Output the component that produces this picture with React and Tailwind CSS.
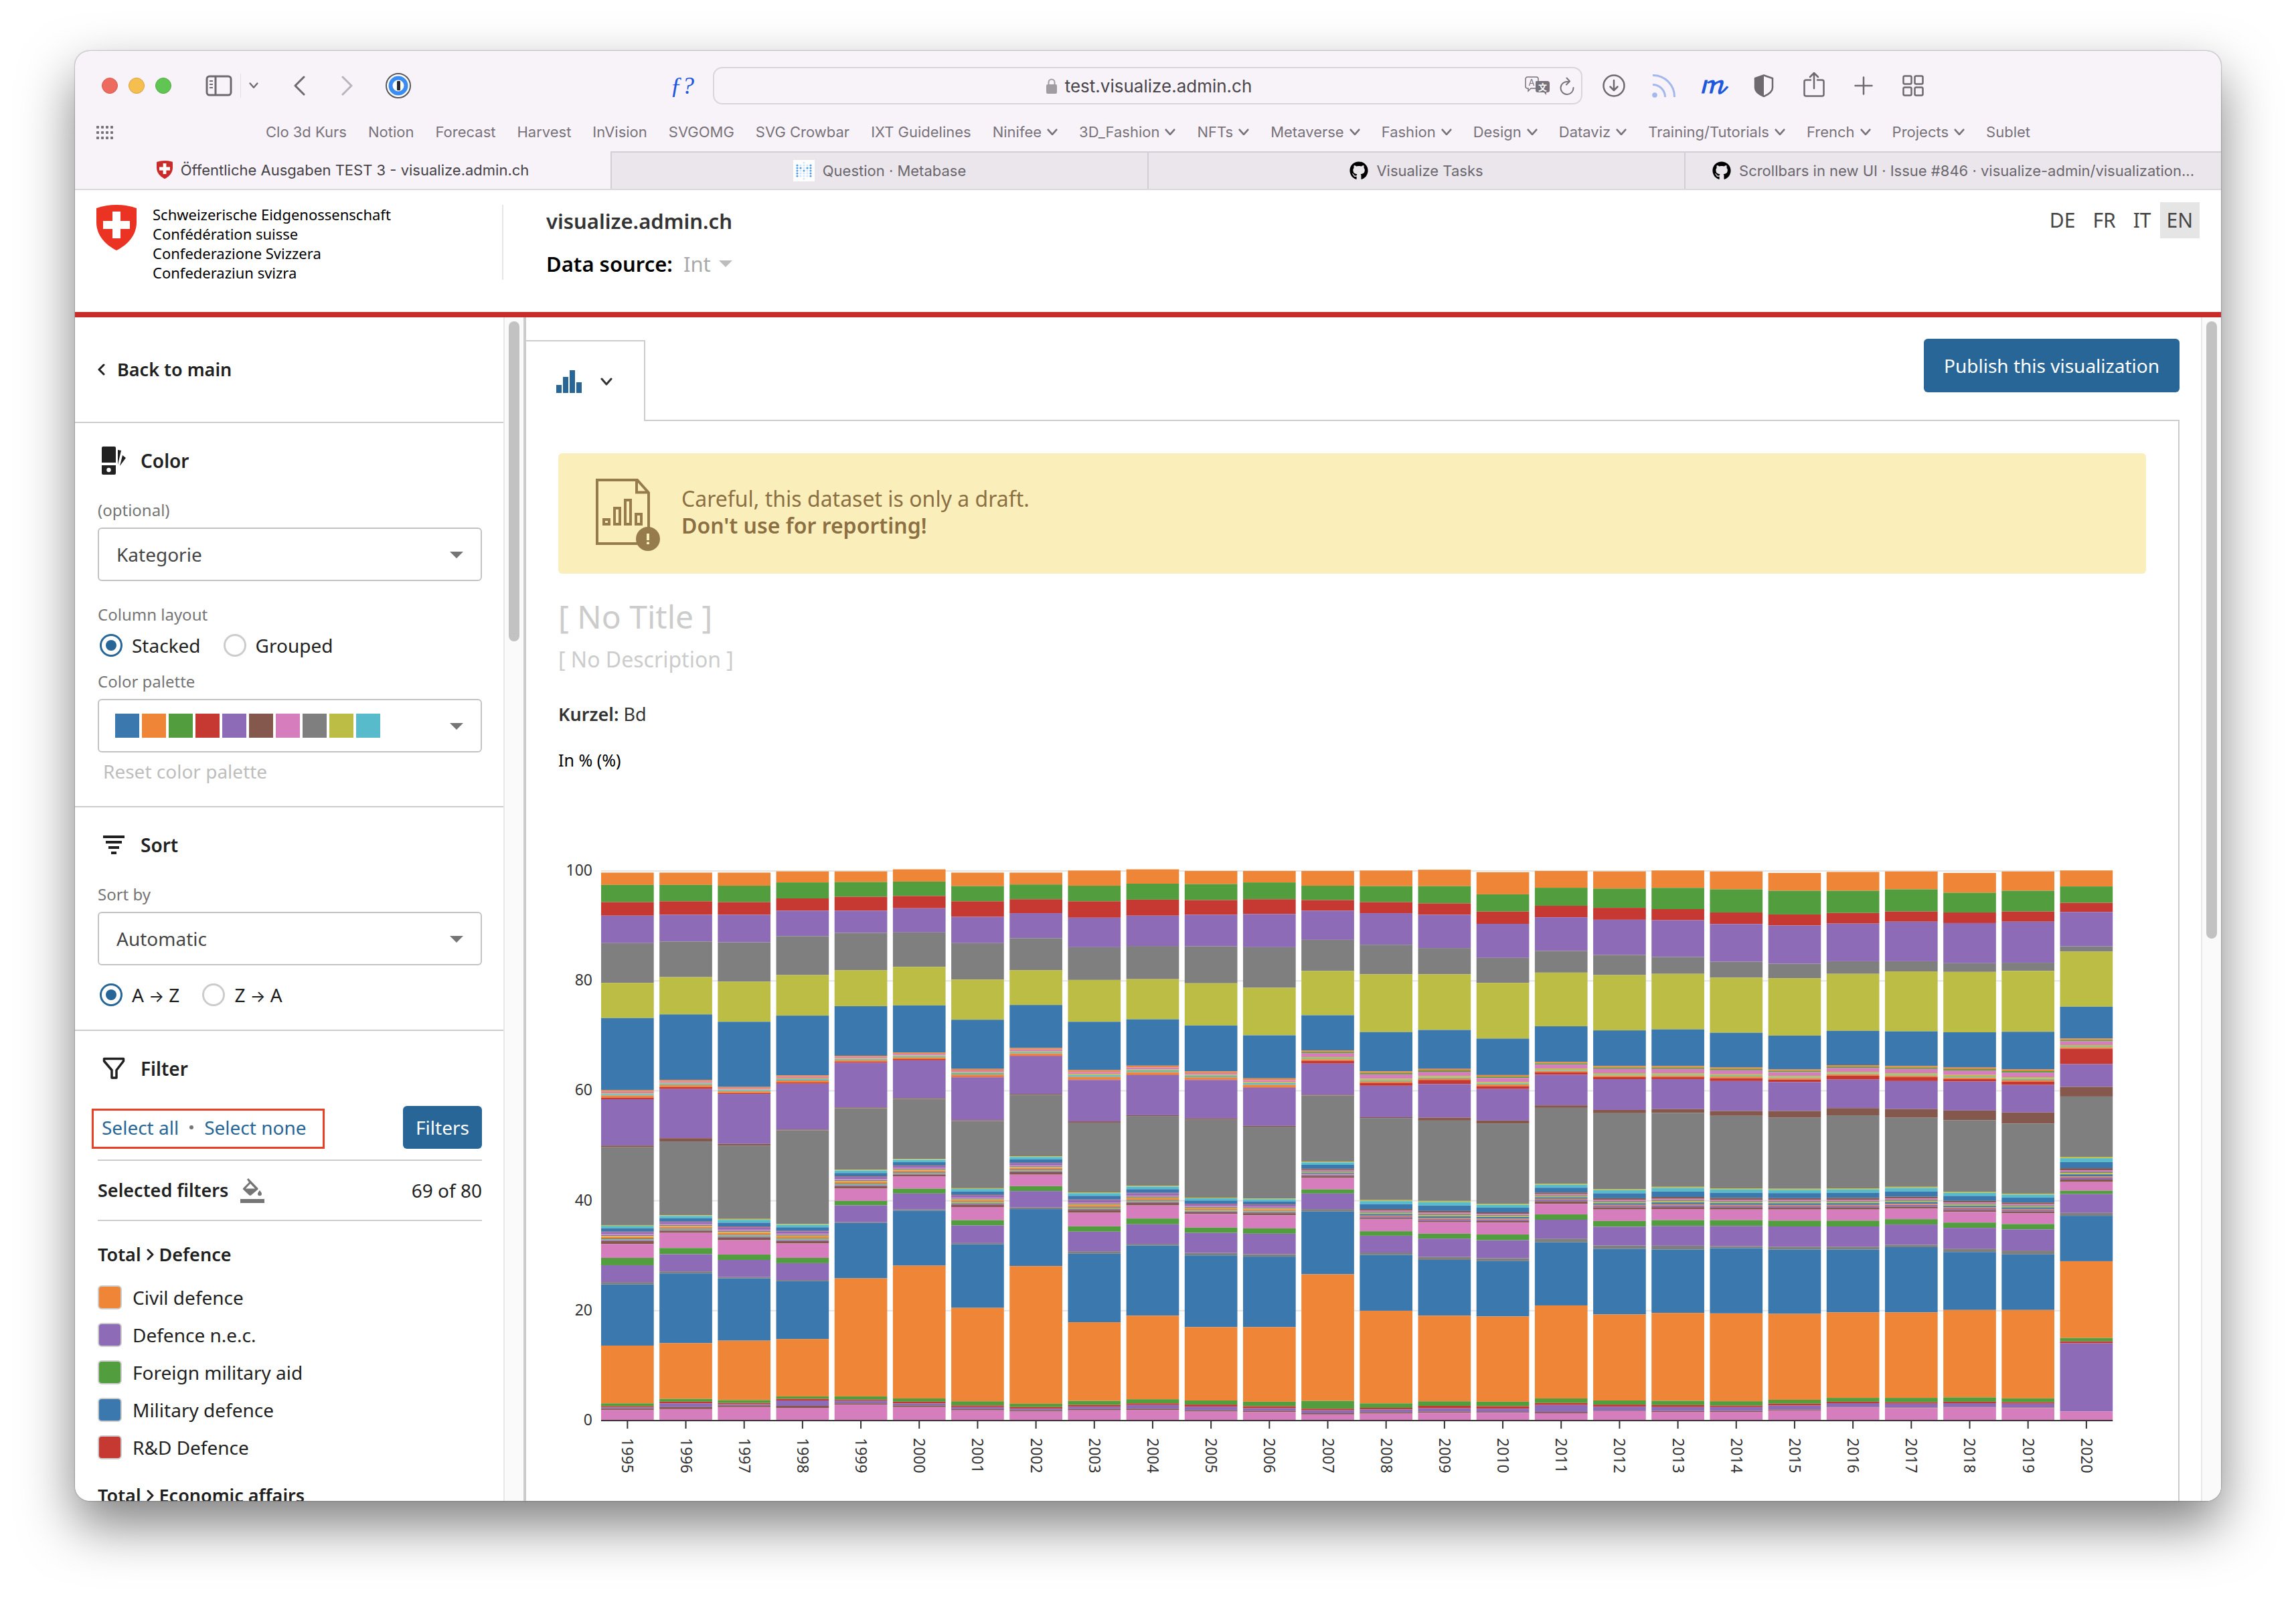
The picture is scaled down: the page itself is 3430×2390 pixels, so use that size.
import React, { useState } from 'react';
import { FaGithub } from 'react-icons/fa';

const C = {
  blue: '#3a78ae',
  orange: '#ef8637',
  green: '#529e3e',
  red: '#c53932',
  purple: '#8e6bb6',
  brown: '#85584d',
  pink: '#d57dbd',
  gray: '#7f7f7f',
  olive: '#bcbd45',
  cyan: '#58bbcb',
};

const PALETTE = [C.blue, C.orange, C.green, C.red, C.purple, C.brown, C.pink, C.gray, C.olive, C.cyan];

const BOOKMARKS = [
  ['Clo 3d Kurs'],
  ['Notion'],
  ['Forecast'],
  ['Harvest'],
  ['InVision'],
  ['SVGOMG'],
  ['SVG Crowbar'],
  ['IXT Guidelines'],
  ['Ninifee', true],
  ['3D_Fashion', true],
  ['NFTs', true],
  ['Metaverse', true],
  ['Fashion', true],
  ['Design', true],
  ['Dataviz', true],
  ['Training/Tutorials', true],
  ['French', true],
  ['Projects', true],
  ['Sublet'],
];

const DEFENCE = [
  ['Civil defence', C.orange],
  ['Defence n.e.c.', C.purple],
  ['Foreign military aid', C.green],
  ['Military defence', C.blue],
  ['R&D Defence', C.red],
];

// Thin categories between two large ones, as [color, share of the zone]
const UPPER_EARLY = [[C.orange, 0.2], [C.pink, 0.22], [C.olive, 0.12], [C.cyan, 0.18], [C.orange, 0.28]];
const UPPER_LATE = [[C.orange, 0.14], [C.green, 0.12], [C.pink, 0.38], [C.olive, 0.14], [C.cyan, 0.08], [C.orange, 0.14]];
const LOWER_EARLY = [
  [C.olive, 0.05], [C.cyan, 0.15], [C.blue, 0.21], [C.red, 0.03], [C.purple, 0.13], [C.pink, 0.06], [C.gray, 0.06],
  [C.olive, 0.04], [C.orange, 0.11], [C.blue, 0.04], [C.olive, 0.03], [C.green, 0.03], [C.purple, 0.06],
];
const LOWER_LATE = [
  [C.olive, 0.06], [C.cyan, 0.17], [C.blue, 0.27], [C.brown, 0.09], [C.pink, 0.06], [C.gray, 0.06],
  [C.olive, 0.06], [C.blue, 0.09], [C.orange, 0.05], [C.purple, 0.09],
];

// Order of the bands from the top of a column; "upper" and "lower" are the thin zones
const BANDS = [
  C.orange, C.green, C.red, C.purple, C.gray, C.olive, C.blue, 'upper', C.red, C.purple, C.brown, C.gray,
  'lower', C.brown, C.pink, C.green, C.purple, C.gray, C.blue, C.orange, C.green, C.red, C.purple, C.brown, C.pink,
];

// Top edge of every band, counted down; base is the zero line, unit is one percent
const SERIES = [
  {
    base: 1409,
    unit: 13.41,
    rows: {
      1995: [72, 102, 144, 177, 244, 341, 427, 603, 621, 625, 738, 742, 932, 971, 978, 1012, 1030, 1071, 1077, 1226, 1367, 1374, 1377, 1380, 1383],
      1996: [72, 102, 142, 175, 240, 327, 418, 578, 595, 600, 720, 728, 908, 946, 951, 988, 1003, 1045, 1050, 1220, 1356, 1363, 1367, 1376, 1381],
      1997: [72, 104, 144, 175, 242, 338, 436, 595, 610, 612, 734, 738, 917, 963, 969, 1004, 1017, 1059, 1062, 1214, 1359, 1366, 1369, 1372, 1376],
      1998: [69, 96, 135, 165, 227, 322, 421, 567, 584, 587, 699, 701, 929, 971, 977, 1012, 1025, 1066, 1069, 1210, 1350, 1356, 1360, 1373, 1378],
      1999: [69, 95, 131, 165, 219, 310, 398, 519, 533, 536, 645, 647, 797, 837, 843, 873, 884, 925, 927, 1062, 1350, 1358, 1361, 1367, 1370],
      2000: [64, 94, 129, 159, 218, 302, 396, 511, 527, 530, 622, 624, 771, 809, 813, 843, 855, 894, 897, 1031, 1355, 1363, 1367, 1372, 1376],
      2001: [72, 105, 142, 180, 244, 333, 431, 551, 570, 572, 676, 678, 842, 882, 888, 920, 933, 976, 979, 1134, 1362, 1372, 1376, 1381, 1384],
      2002: [72, 101, 137, 171, 232, 310, 395, 500, 518, 520, 612, 614, 764, 803, 809, 837, 849, 889, 893, 1032, 1368, 1376, 1380, 1384, 1387],
      2003: [67, 104, 142, 182, 254, 334, 436, 554, 577, 578, 679, 682, 852, 895, 902, 935, 948, 996, 1002, 1169, 1361, 1371, 1375, 1381, 1384],
      2004: [64, 99, 138, 177, 251, 332, 430, 543, 565, 566, 664, 666, 836, 878, 884, 916, 930, 978, 982, 1153, 1357, 1367, 1371, 1380, 1383],
      2005: [68, 100, 139, 175, 252, 342, 445, 557, 577, 578, 672, 675, 865, 901, 905, 938, 951, 1000, 1006, 1181, 1360, 1370, 1375, 1384, 1387],
      2006: [68, 96, 137, 173, 254, 353, 469, 574, 596, 597, 690, 692, 867, 903, 908, 940, 953, 1003, 1009, 1181, 1363, 1374, 1379, 1385, 1388],
      2007: [68, 104, 139, 165, 236, 312, 420, 506, 531, 538, 614, 616, 777, 812, 817, 845, 855, 893, 899, 1052, 1361, 1380, 1384, 1391, 1394],
      2008: [67, 105, 144, 171, 248, 320, 461, 557, 585, 592, 669, 671, 871, 915, 918, 947, 958, 999, 1005, 1141, 1367, 1378, 1382, 1389, 1392],
      2009: [65, 105, 147, 175, 256, 320, 456, 551, 578, 588, 670, 677, 873, 922, 925, 953, 965, 1010, 1017, 1153, 1362, 1373, 1379, 1387, 1390],
      2010: [71, 125, 167, 197, 280, 341, 477, 566, 593, 600, 677, 684, 880, 922, 926, 955, 969, 1013, 1020, 1155, 1363, 1374, 1380, 1388, 1390],
      2011: [68, 109, 153, 181, 263, 316, 447, 534, 559, 565, 640, 646, 831, 874, 880, 906, 919, 965, 974, 1128, 1355, 1366, 1371, 1388, 1391],
      2012: [69, 111, 158, 187, 273, 322, 457, 544, 571, 576, 651, 659, 844, 889, 894, 922, 936, 982, 990, 1150, 1360, 1370, 1375, 1385, 1386],
    },
  },
  {
    base: 1196,
    unit: 11.38,
    rows: {
      2013: [57, 93, 137, 160, 236, 271, 386, 462, 485, 489, 551, 559, 712, 754, 758, 781, 793, 834, 842, 973, 1155, 1164, 1168, 1176, 1178],
      2014: [59, 96, 144, 168, 246, 279, 393, 465, 487, 493, 555, 565, 715, 755, 759, 781, 793, 835, 839, 974, 1156, 1165, 1168, 1176, 1178],
      2015: [62, 99, 148, 171, 250, 280, 399, 469, 490, 495, 555, 569, 716, 755, 759, 782, 794, 836, 842, 975, 1153, 1161, 1165, 1173, 1175],
      2016: [60, 99, 145, 167, 245, 271, 389, 460, 482, 490, 549, 564, 715, 755, 759, 782, 794, 836, 842, 972, 1149, 1157, 1160, 1168, 1169],
      2017: [59, 96, 142, 163, 245, 266, 390, 462, 485, 493, 551, 569, 712, 753, 757, 779, 790, 832, 837, 972, 1149, 1158, 1161, 1169, 1170],
      2018: [62, 103, 144, 166, 249, 267, 392, 465, 489, 494, 554, 574, 722, 760, 764, 786, 797, 840, 847, 967, 1148, 1157, 1160, 1168, 1169],
      2019: [59, 99, 142, 163, 248, 265, 391, 469, 494, 501, 558, 581, 726, 763, 767, 789, 800, 844, 852, 967, 1150, 1158, 1161, 1169, 1170],
      2020: [57, 90, 124, 143, 214, 225, 339, 405, 426, 458, 505, 525, 650, 697, 702, 720, 727, 766, 772, 866, 1025, 1032, 1036, 1177, 1177],
    },
  },
];

const COLUMNS = SERIES.flatMap(({ base, unit, rows }) =>
  Object.entries(rows).map(([year, tops]) => ({
    year,
    segments: BANDS.flatMap((band, i) => {
      const from = (base - tops[i]) / unit;
      const to = i + 1 < tops.length ? (base - tops[i + 1]) / unit : 0;
      if (band !== 'upper' && band !== 'lower') return [{ fill: band, from, to }];
      const late = Number(year) > 2006;
      const parts = band === 'upper' ? (late ? UPPER_LATE : UPPER_EARLY) : late ? LOWER_LATE : LOWER_EARLY;
      let at = from;
      return parts.map(([fill, share]) => {
        const start = at;
        at -= (from - to) * share;
        return { fill, from: start, to: at };
      });
    }),
  }))
);

const TOP = 150;
const ZERO = 971;
const LEFT = 64;
const STEP = 87.18;
const BAR = 78.7;
const y = (v) => ZERO - (v * (ZERO - TOP)) / 100;

function StackedChart() {
  return (
    <svg viewBox="0 0 2372 1070" className="block w-full" role="img" aria-label="In % (%)">
      {[20, 40, 60, 80, 100].map((v) => (
        <rect key={v} x={LEFT} y={y(v) - 1} width={STEP * 25 + BAR} height="2" fill="#e5e5e5" />
      ))}
      {[0, 20, 40, 60, 80, 100].map((v) => (
        <text key={v} x="51" y={y(v) + 7} textAnchor="end" fontSize="23" fill="#333333">
          {v}
        </text>
      ))}
      {COLUMNS.map(({ year, segments }, i) => {
        const x = LEFT + i * STEP;
        const mid = x + BAR / 2;
        return (
          <g key={year}>
            {segments.map((s, n) => (
              <rect key={n} x={x} y={y(s.from)} width={BAR} height={Math.max(0, y(s.to) - y(s.from))} fill={s.fill} />
            ))}
            <rect x={mid - 1} y={ZERO} width="2" height="12" fill="#333333" />
            <text transform={`translate(${mid - 8} ${ZERO + 26}) rotate(90)`} fontSize="23" fill="#333333">
              {year}
            </text>
          </g>
        );
      })}
      <rect x={LEFT} y={ZERO - 1} width={STEP * 25 + BAR} height="2" fill="#333333" />
    </svg>
  );
}

function Chevron({ d = 'M2 2l7 8 7-8', className = 'w-[18px]', box = '0 0 18 12', width = 3 }) {
  return (
    <svg viewBox={box} className={className} fill="none" stroke="currentColor" strokeWidth={width} strokeLinecap="round" strokeLinejoin="round">
      <path d={d} />
    </svg>
  );
}

function SwissShield({ className, fill = '#eb3323' }) {
  return (
    <svg viewBox="0 0 60 68" className={className}>
      <path d="M0 5Q14 0 30 0T60 5V26C60 46 46 60 30 68C14 60 0 46 0 26Z" fill={fill} />
      <path d="M24 10h12v14h14v12H36v14H24V36H10V24h14z" fill="#fff" />
    </svg>
  );
}

function MetabaseIcon() {
  const dots = [];
  for (let r = 0; r < 7; r++) {
    for (let c = 0; c < 5; c++) {
      const edge = r === 0 || r === 6;
      if (edge && c !== 2) continue;
      const strong = !edge && (c === 0 || c === 4 || (r === 2 && c !== 2) || (r === 3 && c === 2));
      dots.push(<circle key={`${r}-${c}`} cx={6 + c * 5} cy={4 + r * 4} r="1.6" fill="#509ee3" opacity={strong ? 1 : 0.25} />);
    }
  }
  return (
    <svg viewBox="0 0 32 32" className="size-8 bg-white">
      {dots}
    </svg>
  );
}

function Toolbar() {
  return (
    <div className="grid h-[104px] shrink-0 grid-cols-[889px_minmax(0,1363px)_1fr] items-center text-[#6e686f]">
      <div className="flex items-center pl-10">
        <div className="flex gap-4">
          <button aria-label="Close" className="size-6 rounded-full border border-[#d8584c] bg-[#ed6a5e]" />
          <button aria-label="Minimize" className="size-6 rounded-full border border-[#d9a13c] bg-[#f5bf4f]" />
          <button aria-label="Zoom" className="size-6 rounded-full border border-[#52a842] bg-[#61c554]" />
        </div>
        <button aria-label="Sidebar" className="ml-[51px]">
          <svg viewBox="0 0 40 32" className="w-10" fill="none" stroke="currentColor" strokeWidth="3">
            <rect x="2" y="2" width="36" height="28" rx="4" />
            <path d="M15 2v28" />
            <path d="M6 9h5M6 14h5M6 19h5" strokeWidth="2" />
          </svg>
        </button>
        <span className="ml-3 h-9 w-px bg-[#e3dee5]" />
        <button aria-label="Tab groups" className="ml-3">
          <Chevron className="w-[14px]" />
        </button>
        <button aria-label="Back" className="ml-[52px]">
          <Chevron box="0 0 18 30" d="M16 2L3 15l13 13" />
        </button>
        <button aria-label="Forward" className="ml-[54px] text-[#b9b4bb]">
          <Chevron box="0 0 18 30" d="M2 2l13 13L2 28" />
        </button>
        <button aria-label="Passwords" className="ml-12">
          <svg viewBox="0 0 38 38" className="w-[38px]">
            <circle cx="19" cy="19" r="18" fill="#fff" stroke="#56565a" strokeWidth="2" />
            <circle cx="19" cy="19" r="11.5" fill="#fff" stroke="#3b8cf2" strokeWidth="6" />
            <rect x="17" y="12" width="5" height="14" rx="1" fill="#26282c" />
          </svg>
        </button>
      </div>
      <div className="flex items-center">
        <span className="w-16 font-['Liberation_Serif',serif] text-[36px] italic leading-none text-[#1c57dc]">ƒ?</span>
        <div className="flex h-14 flex-1 items-center rounded-[14px] border-2 border-[#dad5dc] pr-2.5">
          <div className="flex flex-1 items-center justify-center gap-3 pl-[88px]">
            <svg viewBox="0 0 16 23" className="w-4" fill="#a09ca2">
              <rect y="9" width="16" height="14" rx="2" />
              <path d="M3.5 10V6a4.5 4.5 0 0 1 9 0v4" fill="none" stroke="#a09ca2" strokeWidth="2" />
            </svg>
            <span className="text-[26px] text-[#49454b]">test.visualize.admin.ch</span>
          </div>
          <svg viewBox="0 0 38 28" className="mr-3.5 w-[38px]">
            <path d="M4 1h13a3 3 0 0 1 3 3v4h-3v10H9l-4 4v-4H4a3 3 0 0 1-3-3V4a3 3 0 0 1 3-3z" fill="none" stroke="#77717a" strokeWidth="1.5" />
            <rect x="16" y="7" width="21" height="17" rx="3.5" fill="#77717a" />
            <path d="M27 22l5 6v-6z" fill="#77717a" />
            <text x="5.5" y="14" fontSize="13" fill="#77717a">A</text>
            <text x="20" y="20.5" fontSize="13" fontWeight="700" fill="#fff" fontFamily="Noto Sans CJK SC, sans-serif">文</text>
          </svg>
          <svg viewBox="0 0 22 27" className="w-[22px]" fill="none" stroke="#77717a" strokeWidth="2" strokeLinecap="round" strokeLinejoin="round">
            <path d="M13 7.2A9.5 9.5 0 1 0 20.5 16M10.5 1.5l4.5 5-5 5" />
          </svg>
        </div>
      </div>
      <div className="flex items-center gap-10 pl-[30px]">
        <svg viewBox="0 0 34 34" className="w-[34px]" fill="none" stroke="currentColor" strokeWidth="2.5" strokeLinecap="round" strokeLinejoin="round">
          <circle cx="17" cy="17" r="15.5" />
          <path d="M17 9v15M11.500 18.500L17 24l5.500-5.500" />
        </svg>
        <svg viewBox="0 0 36 36" className="w-9" fill="none" stroke="#a3b8ec" strokeWidth="3">
          <path d="M1 2.5A32 32 0 0 1 33.5 35M1 16.5A18.5 18.5 0 0 1 19.5 35" />
          <circle cx="4" cy="32" r="3.8" fill="#a3b8ec" stroke="none" />
        </svg>
        <span className="flex w-9 justify-center font-['DejaVu_Math_TeX_Gyre','DejaVu_Serif',serif] text-[38px] font-bold leading-9 text-[#1c57dc]">𝓂</span>
        <svg viewBox="0 0 30 34" className="w-[30px]">
          <path d="M15 1.5L28 6v14c0 6-6 10-13 13C8 30 2 26 2 20V6z" fill="none" stroke="currentColor" strokeWidth="2.5" strokeLinejoin="round" />
          <path d="M15 1.5V33C8 30 2 26 2 20V6z" fill="currentColor" />
        </svg>
        <svg viewBox="0 0 32 38" className="mb-1 ml-1 w-8" fill="none" stroke="currentColor" strokeWidth="2.5" strokeLinecap="round" strokeLinejoin="round">
          <path d="M11 12.5H4a2.5 2.5 0 0 0-2.5 2.5v19A2.5 2.5 0 0 0 4 36.5h24a2.5 2.5 0 0 0 2.5-2.5V15a2.500 2.500 0 0 0-2.500-2.500h-7M16 25V2M10 8l6-6 6 6" />
        </svg>
        <svg viewBox="0 0 28 28" className="ml-1 w-7" fill="none" stroke="currentColor" strokeWidth="2.5" strokeLinecap="round">
          <path d="M14 1.5v25M1.5 14h25" />
        </svg>
        <svg viewBox="0 0 32 32" className="ml-1 w-8" fill="none" stroke="currentColor" strokeWidth="2.5">
          <rect x="1.5" y="1.5" width="12" height="12" rx="2" />
          <rect x="18.5" y="1.5" width="12" height="12" rx="2" />
          <rect x="1.5" y="18.5" width="12" height="12" rx="2" />
          <rect x="18.5" y="18.5" width="12" height="12" rx="2" />
        </svg>
      </div>
    </div>
  );
}

function Bookmarks() {
  return (
    <nav className="grid h-[46px] shrink-0 grid-cols-[1fr_auto_1fr] items-start text-[22px] leading-[34px] text-[#78727a]">
      <svg viewBox="0 0 26 20" className="ml-8 mt-2 w-[26px]" fill="currentColor">
        {[0, 8, 16].map((r) => [0, 7, 14, 21].map((c) => <rect key={`${r}${c}`} x={c} y={r} width="4" height="4" rx="1" />))}
      </svg>
      <div className="flex gap-8 whitespace-nowrap">
        {BOOKMARKS.map(([name, menu]) => (
          <a key={name} href="#" className="flex items-center gap-2">
            {name}
            {menu && <Chevron className="w-4" width={3} />}
          </a>
        ))}
      </div>
    </nav>
  );
}

function BrowserTabs() {
  const other = 'flex flex-1 items-center justify-center gap-3 border-l-2 border-t-2 border-[#d3ced5] bg-[#eae6ec]';
  return (
    <div className="flex h-[58px] shrink-0 whitespace-nowrap border-b-2 border-[#dcd8de] text-[22px] text-[#6b666d]">
      <div className="flex flex-1 items-center justify-center gap-3 text-[#454147]">
        <SwissShield className="w-6" fill="#c92b2b" />
        Öffentliche Ausgaben TEST 3 - visualize.admin.ch
      </div>
      <div className={other}>
        <MetabaseIcon />
        Question · Metabase
      </div>
      <div className={other}>
        <FaGithub className="size-7 text-black" />
        Visualize Tasks
      </div>
      <div className={other}>
        <FaGithub className="size-7 text-black" />
        Scrollbars in new UI · Issue #846 · visualize-admin/visualization...
      </div>
    </div>
  );
}

function SiteHeader() {
  return (
    <header className="flex h-[190px] shrink-0 items-start border-b-8 border-[#c92b2b] bg-white pl-8 pr-8 pt-[22px]">
      <SwissShield className="w-[60px]" />
      <div className="ml-6 h-28 w-[524px] border-r-2 border-[#e5e5e5] text-[22px] leading-[29px] text-black">
        <p>Schweizerische Eidgenossenschaft</p>
        <p>Confédération suisse</p>
        <p>Confederazione Svizzera</p>
        <p>Confederaziun svizra</p>
      </div>
      <div className="ml-16 text-[31px] leading-[48px]">
        <p className="font-semibold text-[#333333]">visualize.admin.ch</p>
        <div className="mt-4 flex items-center gap-4">
          <label htmlFor="source" className="font-semibold text-black">Data source:</label>
          <div className="flex items-center gap-3 text-[#a9a9a9]">
            <select id="source" className="appearance-none">
              <option>Int</option>
            </select>
            <svg viewBox="0 0 20 10" className="w-5" fill="#bdbdbd">
              <path d="M0 0h20L10 10z" />
            </svg>
          </div>
        </div>
      </div>
      <div className="-mt-1 ml-auto flex text-[30px] leading-[54px] text-[#454545]">
        {['DE', 'FR', 'IT'].map((l) => (
          <a key={l} href="#" className="px-[13px]">{l}</a>
        ))}
        <a href="#" className="bg-[#e5e5e5] px-2.5">EN</a>
      </div>
    </header>
  );
}

function Caret() {
  return (
    <svg viewBox="0 0 20 10" className="pointer-events-none absolute right-7 top-9 w-5" fill="#757575">
      <path d="M0 0h20L10 10z" />
    </svg>
  );
}

function SelectBox({ id, value }) {
  return (
    <div className="relative mt-2.5">
      <select id={id} className="block h-20 w-full appearance-none rounded-md border-2 border-[#c3c3c3] bg-white px-[26px] text-[28px] text-[#454545]">
        <option>{value}</option>
      </select>
      <Caret />
    </div>
  );
}

function Radio({ name, label, checked, onChange }) {
  return (
    <label className="flex h-9 items-center gap-3.5 text-[28px] text-[#212121]">
      <input
        type="radio"
        name={name}
        checked={checked}
        onChange={onChange}
        className="grid size-[34px] appearance-none place-content-center rounded-full border-[3px] border-[#cccccc] bg-white before:size-4 before:rounded-full checked:border-[#276696] checked:before:bg-[#276696]"
      />
      {label}
    </label>
  );
}

function SectionTitle({ icon, children }) {
  return (
    <h2 className="flex h-10 items-center text-[28px] font-semibold text-[#212121]">
      <span className="flex w-16 pl-1.5">{icon}</span>
      {children}
    </h2>
  );
}

function GroupTitle({ className, children }) {
  return (
    <h3 className={`flex h-10 items-center gap-2 whitespace-nowrap text-[27px] font-semibold text-[#212121] ${className}`}>
      Total
      <Chevron box="0 0 11 18" d="M2 2l7 7-7 7" className="w-[11px]" />
      {children}
    </h3>
  );
}

function Scrollbar({ thumb }) {
  return (
    <div className="flex w-[30px] shrink-0 justify-center border-l-2 border-[#e8e8e8] bg-[#fafafa] pt-1.5">
      <div className={`w-4 rounded-full bg-[#c2c2c2] ${thumb}`} />
    </div>
  );
}

const LABEL = 'block text-[24px] leading-8 text-[#757575]';
const SECTION = 'border-b-2 border-[#cccccc] pl-[34px] pr-8';
const ARROW = <span className="font-['Inter',sans-serif] text-[24px]">→</span>;

function Sidebar() {
  const [layout, setLayout] = useState('Stacked');
  const [order, setOrder] = useState('az');
  return (
    <aside className="flex shrink-0 border-r-4 border-[#cccccc]">
      <div className="w-[640px]">
        <div className={`flex h-[158px] items-center ${SECTION}`}>
          <a href="#" className="flex items-center gap-[18px] text-[27px] font-semibold text-[#212121]">
            <Chevron box="0 0 11 18" d="M9 2L2 9l7 7" className="w-[11px]" />
            Back to main
          </a>
        </div>

        <section className={`pb-8 pt-9 ${SECTION}`}>
          <SectionTitle
            icon={
              <svg viewBox="0 0 36 42" className="w-9" fill="#212121">
                <path d="M2 0h17a2 2 0 0 1 2 2v22H0V2a2 2 0 0 1 2-2zM0 28h21v12a2 2 0 0 1-2 2H2a2 2 0 0 1-2-2zM24 5l5 1-5 21zM31 13l5 4-9 12z" />
                <circle cx="10.5" cy="35" r="3.2" fill="#fff" />
              </svg>
            }
          >
            Color
          </SectionTitle>
          <label htmlFor="dimension" className={`mt-[38px] ${LABEL}`}>(optional)</label>
          <SelectBox id="dimension" value="Kategorie" />
          <p className={`mt-[34px] ${LABEL}`}>Column layout</p>
          <div className="mt-3 flex gap-[34px] pl-[3px]">
            <Radio name="layout" label="Stacked" checked={layout === 'Stacked'} onChange={() => setLayout('Stacked')} />
            <Radio name="layout" label="Grouped" checked={layout === 'Grouped'} onChange={() => setLayout('Grouped')} />
          </div>
          <p id="palette" className={`mt-5 ${LABEL}`}>Color palette</p>
          <div className="relative mt-2.5">
            <button aria-labelledby="palette" className="flex h-20 w-full items-center gap-1 rounded-md border-2 border-[#c3c3c3] px-6">
              {PALETTE.map((c) => (
                <span key={c} className="size-9" style={{ background: c }} />
              ))}
            </button>
            <Caret />
          </div>
          <button className="mt-2 block h-10 px-2 text-[28px] leading-[38px] text-[#bdbdbd]">Reset color palette</button>
        </section>

        <section className={`pb-[34px] pt-9 ${SECTION}`}>
          <SectionTitle
            icon={
              <svg viewBox="0 0 36 28" className="w-9" fill="#212121">
                <path d="M2 0h32v4H2zM6 8h24v4H6zM10 16h16v4H10zM14 24h8v4h-8z" />
              </svg>
            }
          >
            Sort
          </SectionTitle>
          <label htmlFor="sort" className={`mt-[38px] ${LABEL}`}>Sort by</label>
          <SelectBox id="sort" value="Automatic" />
          <div className="mt-[26px] flex gap-[34px] pl-[3px]">
            <Radio name="order" label={<span>A {ARROW} Z</span>} checked={order === 'az'} onChange={() => setOrder('az')} />
            <Radio name="order" label={<span>Z {ARROW} A</span>} checked={order === 'za'} onChange={() => setOrder('za')} />
          </div>
        </section>

        <section className="pl-[34px] pr-8 pt-9">
          <SectionTitle
            icon={
              <svg viewBox="0 0 36 34" className="w-9" fill="none" stroke="#212121" strokeWidth="3.5" strokeLinejoin="round">
                <path d="M3.5 2.5h29V6L22 19.5V31h-7V19.5L3.500 6z" />
              </svg>
            }
          >
            Filter
          </SectionTitle>
          <div className="-ml-[9px] mt-9 flex items-end justify-between">
            <div className="flex h-[60px] w-[348px] items-center gap-4 border-[3px] border-[#eb4026] pb-1 pl-3 text-[28px] text-[#276696]">
              <button>Select all</button>
              <span className="size-1.5 rounded-full bg-[#757575]" />
              <button>Select none</button>
            </div>
            <button className="h-16 w-[118px] rounded-md bg-[#276696] text-[28px] text-white">Filters</button>
          </div>
          <div className="mt-4 flex h-[92px] items-center border-y-2 border-[#cccccc] text-[27px] text-[#212121]">
            <span className="font-semibold">Selected filters</span>
            <svg viewBox="0 -1 36 37" className="ml-[18px] w-9" fill="#757575">
              <path d="M0 30h36v6H0z" />
              <path fillRule="evenodd" d="M10 1l2-2 14 14.500a1.800 1.800 0 0 1 0 2.500L16.500 24a2.500 2.500 0 0 1-3.500 0L4.500 16a1.800 1.800 0 0 1 0-2.500L13 5zM15 7L8 14.500h14z" />
              <path d="M29 17c2 2.600 3 4 3 5.200a3 3 0 0 1-6 0c0-1.200 1-2.600 3-5.200z" />
            </svg>
            <span className="ml-auto text-[28px]">69 of 80</span>
          </div>
          <GroupTitle className="mt-[30px]">Defence</GroupTitle>
          <ul className="mt-4">
            {DEFENCE.map(([name, color]) => (
              <li key={name} className="flex h-14 items-center gap-4 text-[28px] text-[#212121]">
                <span className="size-9 rounded-md border-2 border-[#cccccc]" style={{ background: color }} />
                {name}
              </li>
            ))}
          </ul>
          <GroupTitle className="mt-6">Economic affairs</GroupTitle>
        </section>
      </div>
      <Scrollbar thumb="h-[478px]" />
    </aside>
  );
}

function DraftBanner() {
  return (
    <div className="flex h-[180px] items-center rounded-md bg-[#faefbb] pl-14 text-[32px] leading-10 text-[#8c7043]">
      <svg viewBox="0 0 96 108" className="mt-1 w-24" fill="none" stroke="#967b4d" strokeWidth="4">
        <path d="M2 2h60l17 19v76H2zM61 2v18.5h18" />
        <path d="M12 61h8v7h-8zM28 44h8v24h-8zM44 32h8v36h-8zM60 53h8v15h-8z" />
        <circle cx="78" cy="90" r="18" fill="#967b4d" stroke="none" />
        <path d="M78 82v10M78 94.5v3.5" stroke="#faefbb" />
      </svg>
      <div className="ml-8 pb-1">
        <p>Careful, this dataset is only a draft.</p>
        <p className="font-semibold">Don't use for reporting!</p>
      </div>
    </div>
  );
}

export default function App() {
  return (
    <div className="flex h-screen flex-col bg-white px-28 pb-[148px] pt-[76px] font-['Noto_Sans',sans-serif]">
      <div className="flex min-h-0 flex-1 flex-col overflow-hidden rounded-[22px] bg-[#f7f3f9] shadow-[0_0_2px_rgba(0,0,0,0.6),0_36px_80px_rgba(0,0,0,0.5)]">
        <div className="flex flex-col font-['Inter',sans-serif]">
          <Toolbar />
          <Bookmarks />
          <BrowserTabs />
        </div>
        <SiteHeader />
        <div className="flex min-h-0 flex-1 bg-white">
          <Sidebar />
          <main className="flex min-w-0 flex-1 flex-col pr-8">
            <div className="flex h-[155px] shrink-0">
              <button aria-label="Chart type" className="mt-[34px] flex w-[178px] items-center gap-7 border-r-2 border-t-2 border-[#cccccc] pl-[45px] text-[#333333]">
                <svg viewBox="0 0 38 34" className="w-[38px]" fill="#276696">
                  <path d="M0 22h8v12H0zM10 10h8v24h-8zM20 0h8v34h-8zM30 18h8v16h-8z" />
                </svg>
                <Chevron />
              </button>
              <div className="flex flex-1 items-start justify-end border-b-2 border-[#cccccc] pt-8">
                <button className="h-20 rounded-md bg-[#276696] px-[30px] text-[28px] text-white">Publish this visualization</button>
              </div>
            </div>
            <div className="flex-1 border-r-2 border-[#cccccc] px-12 pt-12">
              <DraftBanner />
              <h1 className="mt-8 text-[48px] leading-[64px] text-[#cccccc]">[ No Title ]</h1>
              <p className="mt-3 text-[32px] leading-10 text-[#cccccc]">[ No Description ]</p>
              <p className="mt-11 text-[27px] leading-9 text-[#333333]">
                <b className="font-semibold">Kurzel:</b> Bd
              </p>
              <p className="mt-[34px] text-[25px] leading-8 text-black">In % (%)</p>
              <StackedChart />
            </div>
          </main>
          <Scrollbar thumb="h-[922px]" />
        </div>
      </div>
    </div>
  );
}
